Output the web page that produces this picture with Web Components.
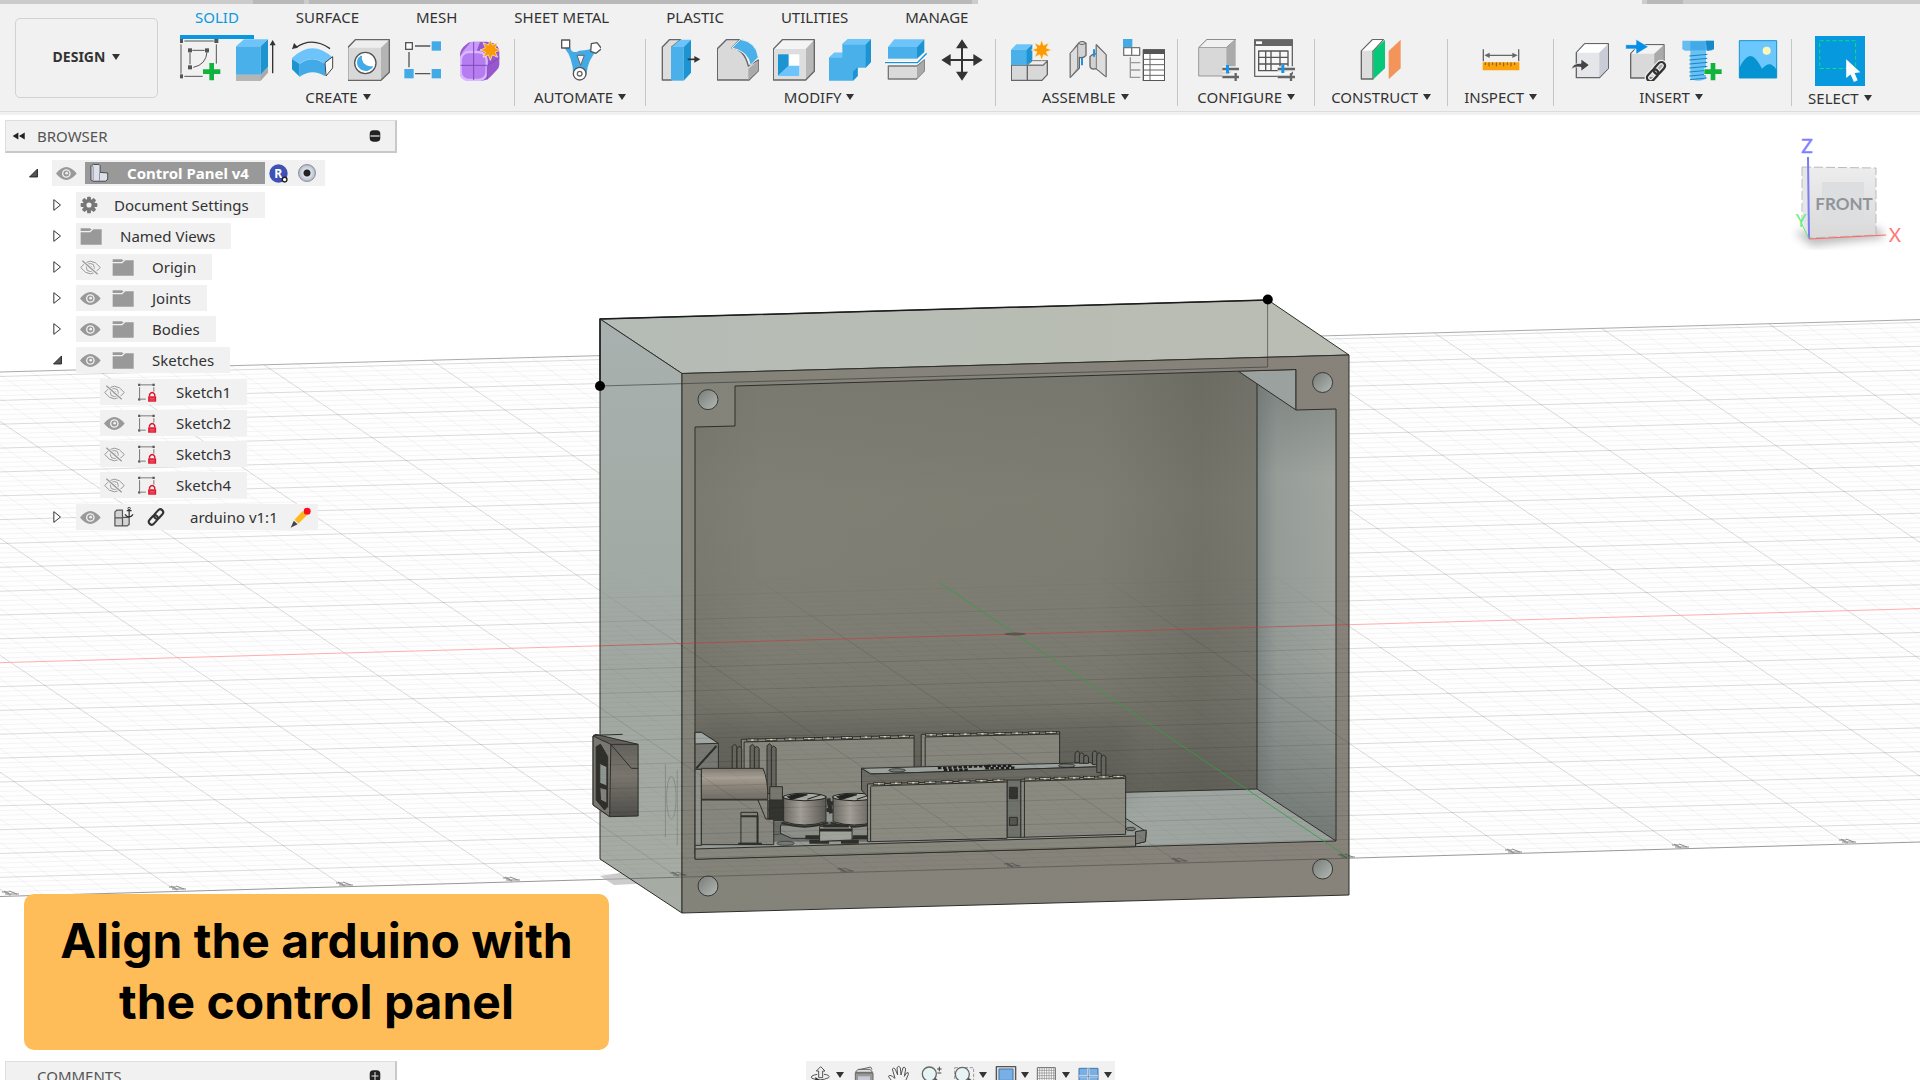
<!DOCTYPE html>
<html lang="en">
<head>
<meta charset="utf-8">
<title>Control Panel v4</title>
<style>
html,body{margin:0;height:100%;overflow:hidden;background:#fff}
body{font-family:"Noto Sans","Open Sans",sans-serif;font-size:15px;color:#333}
cad-app{height:100%}
</style>
</head>
<body>
<cad-app></cad-app>
<script>
const define=(name,html,setup)=>{
  customElements.define(name,class extends HTMLElement{
    constructor(){super();this.attachShadow({mode:'open'});}
    connectedCallback(){
      if(this.ready)return;this.ready=true;
      this.shadowRoot.innerHTML=typeof html==='function'?html(this):html;
      if(setup)setup(this);
    }
  });
};
const BTN='button{font:inherit;color:inherit;background:none;border:0;padding:0;margin:0;cursor:pointer}';
const sq=(x,y,c='#555',s=12)=>`<rect x="${x}" y="${y}" width="${s}" height="${s}" fill="${c}"/>`;
const P=(d,f='none',s='none',w=3)=>`<path d="${d}" fill="${f}" stroke="${s}" stroke-width="${w}" stroke-linejoin="round"/>`;
const star=(cx,cy,r,q,n=8)=>{let d='';for(let i=0;i<n*2;i++){const a=Math.PI*i/n-Math.PI/2,k=i%2?q:r;d+=(i?'L':'M')+(cx+k*Math.cos(a)).toFixed(1)+' '+(cy+k*Math.sin(a)).toFixed(1)}return P(d+'Z','#fb9b04','#fff3dc',2)};
const plus=(x,y)=>P(`M${x-10} ${y-27}h20v17h17v20h-17v17h-20v-17h-17v-20h17Z`,'#f1f1f1')+P(`M${x-7} ${y-26}h14v19h19v14h-19v19h-14v-19h-19v-14h19Z`,'#10b43c');
const lines=(list,c='#555',w=3)=>P(list,'none',c,w);
const sliders=(x,y)=>P(`M${x} ${y}h54M${x} ${y+24}h54`,'none','#f1f1f1',16)+P(`M${x} ${y}h54M${x} ${y+24}h54`,'none','#666',7)+P(`M${x+40} ${y+12}v24`,'none','#666',7)+`<rect x="${x+11}" y="${y-12}" width="9" height="24" fill="#0d96f2"/>`;
const chain=(c,w)=>`<g fill="none" stroke="${c}" stroke-width="${w}" transform="rotate(-48 0 0)"><rect x="-35" y="-11" width="40" height="22" rx="11"/><rect x="-5" y="-11" width="40" height="22" rx="11"/></g>`;
const sunEye=(x,y)=>P(`M${x-31} ${y}Q${x} ${y-39} ${x+31} ${y}Q${x} ${y+39} ${x-31} ${y}Z`,'#999')+`<circle cx="${x}" cy="${y}" r="13" fill="#f1f1f1"/><circle cx="${x}" cy="${y}" r="9" fill="#999"/><circle cx="${x+1}" cy="${y-1}" r="4" fill="#f1f1f1"/>`;
const ICON={
sketch:['540 119 126 126',lines('M553 125h88M543 135v88M649 135v58M553 231h55')+lines('M577 153h37M570 160v35M580 204Q618 196 621 158')+sq(537,119)+sq(643,119)+sq(537,225)+sq(564,147)+sq(615,147)+sq(564,198)+plus(635,217)],
extrude:['708 119 126 126',P('M708 226h74l22-24v18l-22 24h-74Z','#aaa')+P('M708 226h74v18h-74Z','#b5b5b5')+P('M708 141l24-21h72l-22 21Z','#6dc4fa')+P('M708 141h74v85h-74Z','#4ab0ea')+P('M782 141l22-21v82l-22 24Z','#1c94d2')+lines('M818 132v90','#333',4)+P('M818 122l-9 16h18Z','#333')],
revolve:['876 119 126 126',P('M874 178Q936 116 1000 176L975 194Q936 164 899 194Z','#6dc4fa')+P('M874 178L899 194V232L874 208Z','#1c94d2')+P('M899 194Q936 166 975 194V230Q936 206 899 232Z','#42aae6')+P('M975 190L998 172V206L978 230Z','#f8f8f8','#444')+P('M886 146Q936 110 990 148','none','#333',4)+P('M876 150l6-19 12 13Z','#333')],
hole:['1044 119 126 126',P('M1043 145L1066 121H1168L1143 145Z','#eee')+P('M1143 145L1168 121V219L1143 243Z','#b4b4b4')+P('M1043 145H1143V243H1043Z','#d8d8d8')+P('M1043 145L1066 121H1168V219L1143 243H1043Z','none','#666',4)+'<circle cx="1096" cy="191" r="32" fill="#fff" stroke="#555" stroke-width="4"/>'+P('M1082 169Q1066 180 1073 200Q1084 218 1104 214Q1118 208 1119 201Q1100 202 1090 190Q1083 180 1086 169Z','#42aae6')],
pattern:['1210 119 126 126',lines('M1243 140h46M1225 158v46M1243 223h46','#555',4)+sq(1213,128,'#555',24)+sq(1217,132,'#fff',16)+sq(1293,126,'#42aae6',28)+sq(1211,209,'#42aae6',28)+sq(1293,209,'#42aae6',28)],
form:['1380 119 126 126','<path d="M1380 168Q1380 154 1390 143L1404 131Q1410 127 1420 127H1460Q1498 130 1498 160V196Q1497 206 1490 213L1470 234Q1460 244 1446 244H1406Q1380 244 1380 218Z" fill="#9657cf"/>'+P('M1385 160L1412 128H1440L1428 160Z','#c99bfa')+'<rect x="1382" y="158" width="78" height="84" rx="24" fill="#b57df0" stroke="#dcb9ff" stroke-width="7"/>'+lines('M1421 128V242M1382 198H1462L1498 176M1462 200V240','#8447bb')+star(1471,152,31,16)],
automate:['141 119 126 126',P('M160 132Q172 176 203 160Q238 158 252 148Q222 178 218 222H189Q190 180 160 132Z','#42aae6','#42aae6',12)+P('M195 168L217 168 206 198Z','#f1f1f1','#666')+P('M149 122h24v24h-24Z','#fff','#555',4)+P('M238 133L255 130 269 148 252 162 236 156Z','#fff','#555',4)+'<circle cx="203" cy="223" r="19" fill="#fff" stroke="#555" stroke-width="4"/><circle cx="203" cy="223" r="7" fill="#fff" stroke="#666" stroke-width="4"/>'],
press:['450 119 126 126',P('M454 143L475 121H509L482 143V242H454Z','#ddd','#666',4)+P('M482 143L508 121H540L518 143Z','#6dc4fa')+P('M480 143H518V244H480Z','#4ab0ea')+P('M518 143L540 121V220L518 244Z','#1c94d2')+lines('M530 180h24','#333',5)+P('M568 180l-18-10v20Z','#333')],
fillet:['618 119 126 126',P('M619 148L646 121H686L663 146Q700 150 712 200L742 182V214L714 242H619Z','#d9d9d9','#666',4)+P('M712 208L742 184V214L712 242Z','#aaa')+P('M663 146L688 120Q736 128 742 174L718 198Q712 156 663 146Z','#4ab0ea','#f1f1f1',3)],
shell:['786 119 126 126',P('M787 149L814 121H910L884 149Z','#f4f4f4')+P('M884 149L910 121V216L884 242Z','#b8b8b8')+P('M787 149H884V242H787Z','#ddd')+P('M787 149L814 121H910V216L884 242H787Z','none','#666',4)+P('M801 165H865V230H801Z','#fff')+P('M801 165H833V200L801 230Z','#1c94d2')+P('M801 230L833 199H865V230Z','#6dc4fa')],
combine:['954 119 126 126',P('M954 175L970 160H994V134L1010 120H1080V188L1064 205H1040V230L1026 244H954Z','#4ab0ea')+P('M994 134L1010 120H1080L1064 136H994Z','#6dc4fa')+P('M954 175L970 160H994V175Z','#6dc4fa')+P('M1064 136L1080 120V188L1064 205ZM1026 217L1040 203V230L1026 244Z','#1c94d2')],
split:['1122 119 126 126',P('M1131 143L1150 120H1240L1218 143Z','#6dc4fa')+P('M1131 143H1218V178H1131Z','#4ab0ea')+P('M1218 143L1240 120V158L1218 178Z','#1c94d2')+P('M1132 200H1218L1240 182V214L1216 239H1132Z','#dadada','#777',4)+P('M1218 202L1240 182V214L1218 238Z','#aaa')+P('M1122 190H1219L1247 162','none','#fff',10)+P('M1122 190H1219L1247 162','none','#1b92d4',4)],
move:['1291 119 126 126',lines('M1354 140v84M1312 182h84','#333',6)+P('M1354 120l-18 27h36ZM1354 244l-18-27h36ZM1292 182l28-18v36ZM1416 182l-28-18v36Z','#333')],
component:['33 119 126 126',P('M34 197H82V243H34ZM82 197H130L142 184V226L126 243H82Z','#d8d8d8','#666',4)+P('M82 197L98 184H142L128 197Z','#eee','#777')+P('M33 151L49 135H96L80 151Z','#6dc4fa')+P('M33 151H82V197H33Z','#4ab0ea')+P('M80 151L97 135V184L80 197Z','#1c94d2')+star(125,152,31,15)],
joint:['201 119 126 126',P('M211 162L233 135Q246 122 258 132V168Q250 178 238 174V206L211 234Z','#d2d2d2','#666',4)+P('M211 162L233 138V208L211 234Z','#ddd','#777')+P('M318 232L289 208Q270 212 270 200V172Q278 162 289 164V136L318 166Z','#d2d2d2','#666',4)+P('M289 138L318 166V232L289 208Z','#ddd','#777')+lines('M246 176v22M282 150v22','#1b92e8',6)+'<ellipse cx="246" cy="131" rx="10" ry="4" fill="#eee" stroke="#555" stroke-width="3"/>'],
bom:['369 119 126 126',sq(369,119,'#42aae6',28)+P('M371 145h24v23h-24ZM395 145h24v23h-24Z','#fff','#777',4)+lines('M391 174v62M391 190h30M391 212h30M391 234h30','#999',4)+P('M430 152H494V244H430Z','#fff','#555',4)+'<rect x="429" y="150" width="66" height="14" fill="#555"/>'+lines('M430 180h64M430 196h64M430 212h64M430 228h64M450 164v80','#666',3)],
configure:['588 119 126 126',P('M593 145L618 120H704L676 145Z','#f1f1f1','#777')+P('M593 145H676V230H593Z','#d8d8d8')+P('M676 145L704 120V205L676 230Z','#aaa')+P('M593 145V230H680','none','#999',3)+sliders(664,209)],
table:['759 119 126 126',P('M764 122H877V231H764Z','#f7f7f7','#666',4)+'<rect x="762" y="120" width="117" height="20" fill="#666"/><rect x="768" y="126" width="18" height="8" fill="#fff"/>'+lines('M776 155h88v59h-88ZM776 174h88M776 194h88M797 155v59M813 155v59M840 155v59','#555',4)+sliders(833,209)],
construct:['1083 119 126 126',P('M1087 155L1120 121H1153L1122 155V239H1087Z','#ddd','#666',4)+P('M1089 155L1122 122H1150L1122 153Z','#fff')+P('M1123 155L1158 121V207L1123 240Z','#06c878')+P('M1169 155L1205 121V207L1169 240Z','#f3955b')],
measure:['119 119 126 126',lines('M129 150v36M235 150v36M140 168h84','#666',4)+P('M132 168l16-8v16ZM232 168l-16-8v16Z','#666')+P('M127 189H237V213H127Z','#fba20c')+lines('M135 189v8M146 189v12M157 189v8M168 189v12M179 189v8M190 189v12M201 189v8M212 189v12M223 189v8','#845a10',3)],
derive:['385 119 126 126',P('M407 160L432 133H503V207L476 235H407Z','#e4e6ea','#666',4)+P('M409 160L433 135H501L476 160Z','#fff')+P('M476 160L502 135V207L476 234Z','#c9ccd6')+P('M391 211Q398 190 421 192V179L446 197 421 216V204Q402 200 391 211Z','#444','#fff',2)],
link:['550 119 126 126',P('M567 163L592 136H667V207L640 236H567Z','#d9d9d9','#666',4)+P('M569 163L593 138H665L638 163Z','#f4f4f4')+P('M638 163L666 138V205L638 234Z','#aaa')+P('M552 136H583V120L620 142 583 165V149H552Z','#078fe8','#f1f1f1',2)+'<g transform="translate(643 217)">'+chain('#f1f1f1',14)+chain('#333',7)+'</g>'],
screw:['722 119 126 126',P('M726 124H820V150L812 154H734L726 150Z','#68bdf0')+P('M750 126H796V154H750Z','#42aae6')+P('M796 124H821V150L800 154Z','#1788c8')+P('M750 154H797V238Q774 250 750 238Z','#69c2f7')+lines('M747 170l54-5M747 182l54-5M747 194l54-5M747 206l54-5M747 218l54-5M747 230l54-5M749 241l50-5','#1c84bd',3)+plus(818,217)],
picture:['885 119 126 126',P('M892 124H1004V236H892Z','#6cc8fc','#1593d4',3)+P('M892 206Q908 172 924 170Q940 168 960 208Q976 192 986 195Q996 200 1004 212V236H892Z','#0593d2')+'<circle cx="974" cy="154" r="12" fill="#fdf6b8"/>'],
select:['1126 107 149 149','<rect x="1126" y="107" width="149" height="149" fill="#0699dd"/><rect x="1140" y="121" width="107" height="83" fill="none" stroke="#0ddf83" stroke-width="3" stroke-dasharray="12 7"/>'+P('M1219 176V232L1232 222 1242 244 1253 239 1244 217 1261 215Z','#fff')],
eye:['239 152 63 44',sunEye(270,174)],
eyeoff:['239 152 63 44',P('M241 174Q270 136 300 174Q270 212 241 174Z','none','#999',3)+'<circle cx="270" cy="174" r="12" fill="none" stroke="#999" stroke-width="3"/><circle cx="270" cy="174" r="5" fill="#999"/>'+lines('M246 154L292 194','#f1f1f1',9)+lines('M246 154L292 194','#999',4)],
folder:['237 334 66 54',P('M239 338H266L272 341L266 346H239ZM239 350H268L277 341H302V387H239Z','#999')],
gear:['237 238 56 56','<g fill="#777"><circle cx="265" cy="266" r="19"/>'+[0,45,90,135].map(a=>`<rect x="259" y="240" width="12" height="52" rx="3" transform="rotate(${a} 265 266)"/>`).join('')+'</g><circle cx="265" cy="266" r="8" fill="#f1f1f1"/>'],
root:['270 144 60 60',P('M273 151L281 147H298L302 151V172L326 174V193L320 200H280L273 196Z','#dde0e8','#444',3)+P('M300 172V199M273 151L280 154V198','none','#8a90a0',3)],
sketchnode:['406 120 66 70',lines('M417 130h42M413 138v38M463 138v16M417 180h18','#666',3)+sq(408,126,'#555',8)+sq(458,126,'#555',8)+sq(408,177,'#555',8)+P('M443 170H471V189H443Z','#e0142c')+P('M448 170V163Q457 150 466 163V170','none','#e0142c',5)+lines('M448 177h18M448 183h18','#f3a0a8',2)],
part:['336 502 66 66',P('M339 518L346 512H364V536H386V560L380 564H339ZM339 538H364V564','#d4d4d4','#555',4)+lines('M386 510v26M372 526Q386 544 399 526M378 514h16','#333',4)+'<circle cx="386" cy="507" r="4" fill="none" stroke="#333" stroke-width="3"/>'],
chain:['438 506 56 56','<g transform="translate(466 534) scale(.82)">'+chain('#333',8)+'</g>'],
pencil:['864 500 66 66',P('M878 540L903 513 917 526 891 552Z','#fdb91c')+P('M876 543L888 554 866 565Z','#444')+'<circle cx="918" cy="513" r="11" fill="#fb0f1c"/>'],
badge:['806 146 56 56','<circle cx="834" cy="174" r="27" fill="#3f51b5"/><text x="833" y="187" font-size="36" font-weight="700" fill="#fff" text-anchor="middle">R</text><circle cx="852" cy="192" r="7" fill="#fff" stroke="#222" stroke-width="4"/>'],
orbit:['90 40 66 54',P('M116 78V58H109L122 45 135 58H128V78Z','#eee','#555',3)+P('M112 68Q88 72 96 80Q120 90 146 78Q152 70 132 68','none','#555',3)+P('M106 76v14l12-6Z','#333')],
look:['220 44 66 54',P('M224 66L232 57H268L276 66Z','#ddd','#666',3)+P('M236 58L270 50 274 58','none','#666',3)+P('M224 68H277V100H224Z','#999','#666',3)+P('M232 78H268V98H232Z','#c7cbd6')],
hand:['318 42 66 54',P('M334 92L322 76Q326 70 334 76L342 82 334 54Q338 48 343 55L350 72 348 50Q353 42 358 50L360 72 366 50Q372 46 374 54L370 76 376 66Q384 62 382 70L372 94Z','#f2f2f2','#555',3)],
zoom:['422 42 66 54',P('M460 80l14 14','none','#555',7)+'<circle cx="447" cy="69" r="21" fill="#e6f4f6" stroke="#666" stroke-width="4"/>'+lines('M470 54h14M477 47v14M471 66h12','#444',3)],
fit:['522 42 66 54','<rect x="527" y="50" width="57" height="50" fill="none" stroke="#999" stroke-width="3" stroke-dasharray="10 5"/>'+P('M566 82l14 12','none','#555',7)+'<circle cx="550" cy="70" r="21" fill="#e6f4f6" stroke="#666" stroke-width="4"/>'],
display:['652 42 66 54',P('M656 47H714V100H656Z','#ddd','#555',4)+P('M664 54H706V88H664Z','#78b0e6','#4175a8',3)],
grid:['774 42 66 54',P('M778 50H832V100H778Z','#fff','#666',3)+lines('M785 50v50M792 50v50M799 50v50M806 50v50M813 50v50M820 50v50M827 50v50M778 58h54M778 66h54M778 74h54M778 82h54M778 90h54','#888',2)],
views:['896 42 66 54',P('M899 52H956V100H899Z','#78b0e6','#4175a8',3)+lines('M927 52v48M899 76h57','#f1f1f1',6)+lines('M927 52v48M899 76h57','#4175a8',2)],
collapse:['34 52 44 30',P('M36 67L54 56V78ZM56 67L74 56V78Z','#222')],
minus:['1110 50 34 34','<rect x="1112" y="51" width="30" height="32" rx="10" fill="#222"/>'+lines('M1114 67h26','#ccc',4)],
plus:['1110 50 34 34','<rect x="1112" y="51" width="30" height="32" rx="10" fill="#222"/>'+lines('M1117 67h20M1127 56v22','#ddd',3)],
closed:['158 250 30 36',P('M162 252V284L182 268Z','#fff','#333',3)],
open:['84 156 36 36',P('M89 187H115V161Z','#555','#222',3)]
};
define('cad-icon',el=>{
  const [vb,body]=ICON[el.getAttribute('name')];
  return `<style>:host{display:block;flex:none}svg{display:block;width:100%;height:100%}</style><svg viewBox="${vb}" aria-hidden="true">${body}</svg>`;
});

define('tab-strip',`<style>:host{display:flex;gap:27px}</style><slot></slot>`);
define('tool-tab',`<style>${BTN}:host{display:block}
button{display:block;padding:0 15px 4px;height:27px;line-height:27px;border-bottom:4px solid transparent;box-sizing:content-box}
:host([active]) button{color:#0a9ae0;border-color:#0a96e0}</style><button><slot></slot></button>`);

define('tool-group',el=>`<style>${BTN}
:host{display:flex;flex-direction:column;align-items:center;height:67px;padding:0 12px 0 15px;border-right:1px solid #c6c6c6}
:host([last]){border:0}
:host([compact]){padding:0 19px}
:host([tight]){padding:0 16px}
.icons{display:flex;gap:14px;align-items:center;height:43px}
.icons button,cad-icon{display:block;width:42px;height:42px}
:host([last]) .icons button,:host([last]) cad-icon{width:50px;height:50px;flex:none}
.label{display:flex;align-items:center;gap:5px;line-height:20px;margin:6px 6px 0 0;white-space:nowrap}
:host([compact]) .label,:host([tight]) .label{margin-right:0}
.label::after{content:"";border:4px solid transparent;border-top:6px solid #333;border-bottom:0}
</style><div class="icons">${el.getAttribute('icons').split(' ').map(n=>`<button aria-label="${n}"><cad-icon name="${n}"></cad-icon></button>`).join('')}</div><button class="label"><slot></slot></button>`);

define('tool-bar',`<style>${BTN}
:host{display:flex;flex-direction:column;height:115px;background:#f1f1f1;flex:none}
.strip{height:4px;background:linear-gradient(90deg,#cbcbcb 253px,#b9b9b9 253px 304px,#ccc 304px 309px,#b9b9b9 309px 972px,#ccc 972px 978px,#f1f1f1 978px 1642px,#ccc 1642px 1647px,#b9b9b9 1647px 1683px,#ccc 1683px)}
.body{display:flex;height:107px;border-bottom:1px solid #dcdcdc}
.design{margin:14px 22px 0 15px;width:143px;height:80px;flex:none;box-sizing:border-box;border:1px solid #d2d2d2;border-radius:5px;font-weight:700;font-size:14px;padding-bottom:3px;display:flex;align-items:center;justify-content:center;gap:7px}
.design::after{content:"";border:4px solid transparent;border-top:6px solid #333;border-bottom:0}
.right{flex:1;min-width:0}
.groups{display:flex}
tool-group:first-child{padding-left:0}
</style>
<div class="strip"></div>
<div class="body"><button class="design">DESIGN</button>
<div class="right">
<tab-strip><tool-tab active>SOLID</tool-tab><tool-tab>SURFACE</tool-tab><tool-tab>MESH</tool-tab><tool-tab>SHEET METAL</tool-tab><tool-tab>PLASTIC</tool-tab><tool-tab>UTILITIES</tool-tab><tool-tab>MANAGE</tool-tab></tab-strip>
<div class="groups">
<tool-group icons="sketch extrude revolve hole pattern form">CREATE</tool-group>
<tool-group compact icons="automate">AUTOMATE</tool-group>
<tool-group icons="press fillet shell combine split move">MODIFY</tool-group>
<tool-group icons="component joint bom">ASSEMBLE</tool-group>
<tool-group compact icons="configure table">CONFIGURE</tool-group>
<tool-group tight icons="construct">CONSTRUCT</tool-group>
<tool-group tight icons="measure">INSPECT</tool-group>
<tool-group icons="derive link screw picture">INSERT</tool-group>
<tool-group tight last icons="select">SELECT</tool-group>
</div></div></div>`);

define('dock-panel',el=>`<style>${BTN}
:host{display:flex;align-items:center;box-sizing:border-box;width:392px;height:33px;background:#f1f1f1;border:1px solid #dedede;border-right:2px solid #c9c9c9;border-bottom:2px solid #c9c9c9;padding:0 14px 0 6px;color:#555}
.c,.c cad-icon{display:block;width:14px;height:10px}.t{flex:1;padding-left:11px}
.m,.m cad-icon{display:block;width:12px;height:12px}
:host([plain]){height:30px}
:host([plain]) .c{visibility:hidden}
</style><button class="c" aria-label="collapse"><cad-icon name="collapse"></cad-icon></button><span class="t"><slot></slot></span><button class="m" aria-label="options"><cad-icon name="${el.hasAttribute('plain')?'plus':'minus'}"></cad-icon></button>`);

define('tree-node',el=>{
  const s=el.getAttribute('state');
  const ic=(el.getAttribute('icons')||'').split(' ').filter(Boolean).map(n=>n.startsWith('eye')?`<button aria-label="visibility"><cad-icon class="eye" name="${n}"></cad-icon></button>`:`<cad-icon class="${n}" name="${n}"></cad-icon>`);
  const eye=ic[0]&&ic[0].startsWith('<button')?ic.shift():'';
  return `<style>${BTN}
:host{display:block}
.row{display:flex;align-items:center;height:26px;margin-bottom:5px}
.tw{width:24px;height:26px;flex:none;display:flex;align-items:center}
.tw cad-icon{width:11px;height:12px}
.chip{display:flex;align-items:center;height:26px;background:#f1f1f1;padding:0 16px 0 4px;gap:11px;font-size:15px;line-height:20px;white-space:nowrap}
.eye{width:21px;height:15px}.folder,.sketchnode,.part{width:22px;height:20px}.gear{width:18px;height:18px}.chain{width:20px;height:18px;margin-right:6px}
.body{display:flex;align-items:center;gap:18px}
.gear+span{margin-left:-2px}
.part+.chain{margin-left:-7px}
:host([root]) .chip{padding-right:9px;gap:8px}
:host([root]) .body{background:#999;color:#fff;font-weight:700;height:22px;width:175px;padding-left:5px}
.root{width:19px;height:20px}
:host([linked]) .chip{padding-right:7px;gap:12px}
.kids{display:block;padding-left:24px}
:host([state=open]) .kids{padding-top:1px}
:host([state=open]:not([root])) .kids{padding-bottom:1px}
</style><div class="row"><button class="tw" aria-label="toggle">${s?`<cad-icon name="${s}"></cad-icon>`:''}</button><div class="chip">${eye}<div class="body">${ic.join('')}<span>${el.getAttribute('label')}</span></div><slot name="end"></slot></div></div><div class="kids"><slot></slot></div>`;
});

define('active-radio',`<style>:host{display:flex}input{appearance:none;margin:0;width:18px;height:18px;border-radius:50%;border:1px solid #8b8f98;background:radial-gradient(circle,#222 0 3px,#dfe3ec 4px,#a9b1c2 9px)}</style><input type="radio" checked aria-label="Activate component">`);

define('model-tree',`<style>:host{display:block}
.b{width:19px;height:19px;margin-left:-4px}active-radio{margin-left:2px}.p{width:21px;height:21px}</style>
<tree-node root state="open" icons="eye root" label="Control Panel v4"><cad-icon slot="end" class="b" name="badge"></cad-icon><active-radio slot="end"></active-radio>
<tree-node state="closed" icons="gear" label="Document Settings"></tree-node>
<tree-node state="closed" icons="folder" label="Named Views"></tree-node>
<tree-node state="closed" icons="eyeoff folder" label="Origin"></tree-node>
<tree-node state="closed" icons="eye folder" label="Joints"></tree-node>
<tree-node state="closed" icons="eye folder" label="Bodies"></tree-node>
<tree-node state="open" icons="eye folder" label="Sketches">
<tree-node icons="eyeoff sketchnode" label="Sketch1"></tree-node>
<tree-node icons="eye sketchnode" label="Sketch2"></tree-node>
<tree-node icons="eyeoff sketchnode" label="Sketch3"></tree-node>
<tree-node icons="eyeoff sketchnode" label="Sketch4"></tree-node>
</tree-node>
<tree-node linked state="closed" icons="eye part chain" label="arduino v1:1"><cad-icon slot="end" class="p" name="pencil"></cad-icon></tree-node>
</tree-node>`);

define('tip-banner',`<style>:host{display:flex;align-items:center;justify-content:center;box-sizing:border-box;width:585px;height:156px;background:#ffbd59;border-radius:10px;color:#000;font:700 48px/61px Inter,"Noto Sans",sans-serif;text-align:center;padding-bottom:3px}p{margin:0}</style><p><slot></slot></p>`);

define('nav-bar',`<style>${BTN}:host{display:flex;align-items:flex-start;background:#f1f1f1;width:309px;box-sizing:border-box;padding:3px 3px 0 4px;height:33px;justify-content:space-between}
button{display:flex;align-items:center;gap:4px;height:20px;padding:0 2px}cad-icon{width:22px;height:18px}
.m{padding:0}
.m::after{content:"";border:4px solid transparent;border-top:6px solid #333;border-bottom:0;margin-top:2px}</style>
<button class="m" aria-label="orbit"><cad-icon name="orbit"></cad-icon></button><button aria-label="look at"><cad-icon name="look"></cad-icon></button><button aria-label="pan"><cad-icon name="hand"></cad-icon></button><button aria-label="zoom"><cad-icon name="zoom"></cad-icon></button><button class="m" aria-label="fit"><cad-icon name="fit"></cad-icon></button><button class="m" aria-label="display"><cad-icon name="display"></cad-icon></button><button class="m" aria-label="grid"><cad-icon name="grid"></cad-icon></button><button class="m" aria-label="viewports"><cad-icon name="views"></cad-icon></button>`);

define('view-cube',`<style>:host{display:block;width:120px;height:120px}svg{display:block;width:100%;height:100%}</style>
<svg viewBox="1790 130 120 120" font-size="19" font-family="Lato,'Noto Sans',sans-serif">
<defs><linearGradient id="f" x2="0" y2="1"><stop stop-color="#ededed"/><stop offset="1" stop-color="#d9d9d9"/></linearGradient><filter id="b" x="-30%" y="-80%" width="160%" height="260%"><feGaussianBlur stdDeviation="4"/></filter></defs>
<path d="M1794 232L1880 228 1884 238 1812 246Z" fill="#888" opacity=".55" filter="url(#b)"/>
<path d="M1802 167L1876 168 1876 235 1809 239 1803 222Z" fill="url(#f)"/>
<path d="M1802 167L1809 169V239L1803 222Z" fill="#e6e6e6"/>
<path d="M1822 182H1864V224H1822Z" fill="#dcdee0"/>
<path d="M1802 167L1876 168V235L1809 238M1802 167V222" fill="none" stroke="#bbb" stroke-dasharray="9 3"/>
<text x="1844" y="210" font-size="17" font-weight="700" fill="#8f9499" text-anchor="middle">FRONT</text>
<path d="M1808 157L1809 239" stroke="#7b7bf2" fill="none" stroke-width="2"/><path d="M1809 239L1801 222" stroke="#5de67c"/><path d="M1809 239L1886 235" stroke="#f66"/>
<text x="1807" y="153" fill="#7f7fff" stroke="#7f7fff" stroke-width=".5" text-anchor="middle">Z</text><text x="1801" y="227" font-size="17" fill="#5df07c" text-anchor="middle">Y</text><text x="1895" y="242" fill="#ff7878" text-anchor="middle">X</text>
</svg>`);

define('model-view',()=>{
  const S=.0282;
  let minor='',major='',ticks='';
  for(let i=-64;i<=52;i++){
    const y=662.7+i*4.77,d=`M-10 ${(y+.3).toFixed(1)}L1930 ${(y-54.4).toFixed(1)}`;
    if(i%5)minor+=d;else if(i)major+=d;
  }
  for(let k=-50;k<=42;k++){
    const x=1513.5+k*33.4,y=896.5-S*x,d=`M${x.toFixed(1)} ${y.toFixed(1)}l-800 -537.6`;
    if(k%5)minor+=d;else if(k!==-5)major+=d;
    if(k%5===0&&x<1920&&x>-10)ticks+=`M${(x-9).toFixed(0)} ${(y-4).toFixed(0)}h7M${(x-6).toFixed(0)} ${(y-2).toFixed(0)}h14M${(x-2).toFixed(0)} ${(y-5).toFixed(0)}l8 3M${(x-7).toFixed(0)} ${(y-5).toFixed(0)}l7 4`;
  }
  const ln=(d,w=1)=>`<path d="${d}" fill="none" stroke="#2e2e2b" stroke-width="${w}" vector-effect="non-scaling-stroke"/>`;
  const sh=(d,f,w=1)=>`<path d="${d}" fill="${f}" stroke="#2e2e2b" stroke-width="${w}" stroke-linejoin="round" vector-effect="non-scaling-stroke"/>`;
  const hole=(x,y)=>`<ellipse cx="${x}" cy="${y}" rx="10" ry="10" fill="url(#hole)" stroke="#383834"/>`;
  const pin=(x,y,h)=>sh(`M${x} ${y+6}L${x+6} ${y}L${x+12} ${y+6}V${y+h}H${x}Z`,'#66665f');
  const cap=(x)=>sh(`M${x-8} 375V400L${x+20} 415H${x+105}V375Z`,'#8c9089')+sh(`M${x} 290V365Q${x+53} 385 ${x+107} 365V290Z`,'url(#cap)')+`<ellipse cx="${x+53}" cy="291" rx="54" ry="11" fill="#a7aaa2" stroke="#262623" stroke-width="3"/>`+`<path d="M${x+10} 290Q${x+30} 280 ${x+60} 284L${x+20} 298ZM${x+60} 298L${x+95} 284" fill="#222" stroke="#222" stroke-width="3"/>`+ln(`M${x-6} 368Q${x+53} 392 ${x+112} 368`,2);
  const studs=(x0,y0,x1,y1,n)=>{let s='';for(let i=0;i<n;i++){const t=(i+.5)/n,x=x0+(x1-x0)*t,y=y0+(y1-y0)*t;s+=`<rect x="${x-14}" y="${y-3}" width="28" height="6" fill="#a79c86" stroke="#222" stroke-width="2"/><rect x="${x-3}" y="${y-2}" width="6" height="4" fill="#d8d8d2"/>`}return s};
  return `<style>:host{display:block}svg{display:block;width:100%;height:100%}</style>
<svg viewBox="0 115 1920 965" preserveAspectRatio="xMidYMin slice" role="img" aria-label="Enclosure with arduino board">
<defs>
<clipPath id="floor"><path d="M0 372L1920 319V842L0 896.5Z"/></clipPath>
<clipPath id="box"><path d="M600 319L1268 300 1349 355V895L682 913 600 859Z"/></clipPath>
<clipPath id="open"><path d="M735 386L1296 369.5V410L1336 409V841L695 859V427L735 426Z"/></clipPath>
<linearGradient id="m" gradientUnits="userSpaceOnUse" x1="0" y1="570" x2="0" y2="640"><stop stop-color="#000"/><stop offset="1" stop-color="#fff"/></linearGradient>
<mask id="low" maskUnits="userSpaceOnUse" x="500" y="280" width="900" height="660"><rect x="500" y="280" width="900" height="660" fill="url(#m)"/></mask>
<linearGradient id="front"><stop stop-color="#84837a"/><stop offset="1" stop-color="#87827a"/></linearGradient>
<linearGradient id="left" x2="0" y2="1"><stop stop-color="#a8b1af"/><stop offset=".6" stop-color="#a0a7a1"/><stop offset="1" stop-color="#a7ada4"/></linearGradient>
<linearGradient id="top"><stop stop-color="#b5bcb5"/><stop offset="1" stop-color="#babdb3"/></linearGradient>
<linearGradient id="wall"><stop stop-color="#76756b"/><stop offset=".12" stop-color="#7d7c72"/><stop offset=".72" stop-color="#7a796f"/><stop offset=".9" stop-color="#6c6b62"/><stop offset="1" stop-color="#73726a"/></linearGradient>
<linearGradient id="wally" x2="0" y2="1"><stop stop-color="#6d6c63" stop-opacity=".2"/><stop offset=".3" stop-color="#8a897e" stop-opacity=".25"/><stop offset=".6" stop-color="#8a897e" stop-opacity=".15"/><stop offset=".95" stop-color="#504f49" stop-opacity=".42"/></linearGradient>
<linearGradient id="side"><stop stop-color="#7f8785"/><stop offset=".25" stop-color="#969d99"/><stop offset="1" stop-color="#a0a59f"/></linearGradient>
<linearGradient id="sidey" x2="0" y2="1"><stop stop-color="#666d6b" stop-opacity=".5"/><stop offset=".2" stop-color="#666d6b" stop-opacity="0"/><stop offset=".6" stop-color="#666d6b" stop-opacity=".05"/><stop offset="1" stop-color="#555b58" stop-opacity=".6"/></linearGradient>
<linearGradient id="deck"><stop stop-color="#7c827d"/><stop offset=".4" stop-color="#a5aca7"/><stop offset="1" stop-color="#9aa19c"/></linearGradient>
<linearGradient id="hole" x2="1" y2="1"><stop stop-color="#777b78"/><stop offset="1" stop-color="#b4bab6"/></linearGradient>
<linearGradient id="cyl" x2="0" y2="1"><stop stop-color="#7f7a71"/><stop offset=".3" stop-color="#a79f94"/><stop offset=".6" stop-color="#8a8379"/><stop offset="1" stop-color="#716e66"/></linearGradient>
<linearGradient id="cap"><stop stop-color="#6b6963"/><stop offset=".4" stop-color="#a39f97"/><stop offset="1" stop-color="#5b5954"/></linearGradient>
<linearGradient id="usb" x2="0" y2="1"><stop stop-color="#5d5c57"/><stop offset=".5" stop-color="#7a766e"/><stop offset="1" stop-color="#4f4e4a"/></linearGradient>
<g id="net" fill="none"><path d="${minor}" stroke-opacity=".045"/><path d="${major}" stroke-opacity=".14"/></g>
<filter id="soft" x="-20%" y="-50%" width="140%" height="200%"><feGaussianBlur stdDeviation="12"/></filter>
</defs>
<rect y="115" width="1920" height="965" fill="#fff"/>
<g clip-path="url(#floor)"><rect y="300" width="1920" height="620" fill="#fefefe"/><use href="#net" stroke="#000"/></g>
<path d="M0 372L1920 319.6" stroke="#aaa" fill="none"/><path d="M0 896.5L1920 842" stroke="#999" fill="none"/>
<path d="${ticks}" stroke="#8a8a8a" fill="none"/>
<path d="M0 662.7L1920 608.6" stroke="#f99" stroke-opacity=".8" fill="none"/>
<path d="M600 876L620 873 655 883 614 885Z" fill="#aaa" opacity=".6"/>
<g>
${sh('M600 319L1268 300 1349 355 682 373.5Z','url(#top)')}
${sh('M600 319L682 373.5V913L600 859Z','url(#left)')}
${sh('M682 373.5L1349 355V895L682 913Z','url(#front)')}
<g clip-path="url(#open)">
<path d="M695 380L1257 365V789L695 803Z" fill="url(#wall)"/><path d="M695 380L1257 365V789L695 803Z" fill="url(#wally)"/>
<path d="M1257 360H1336V841L1257 789Z" fill="url(#side)"/><path d="M1257 384L1336 409V841L1257 789Z" fill="url(#sidey)"/>
<path d="M695 803L1257 789 1336 841 695 859Z" fill="url(#deck)"/>
<path d="M700 720H1130V800H700Z" fill="#4c4b46" opacity=".3" filter="url(#soft)"/>
${sh('M1238 371L1296 369.5V410Z','#9aa19e')}
${ln('M695 803L1257 789 1336 841M1257 384V789')}
</g>
${ln('M735 386L1296 369.5V410L1336 409V841L695 859V427L735 426Z')}
${hole(708,399.6)}${hole(1322.6,382.5)}${hole(708,886)}${hole(1322.6,869)}
</g>
<g transform="translate(580 700) scale(.3954 .3333)">
<path d="M216 192V412M246 210V436" stroke="#7d8480" stroke-width="2"/><ellipse cx="231" cy="293" rx="12" ry="64" fill="none" stroke="#7d8480" stroke-width="2"/>
${sh('M33 108L40 103 147 133V348L75 350 33 315Z','url(#usb)')}
${sh('M33 108L78 133 75 350 33 315Z','#7a7871')}
${sh('M41 140L52 133 70 170V320L62 330 41 300Z','#2f2f2c')}
${sh('M50 190L68 200V258L50 250Z','#8e9590')}
${sh('M50 262L68 268V310L52 300Z','#85817a')}
${ln('M33 106L108 103M78 133L130 205H147M78 133H147',1)}
${sh('M408 118L845 106V330H408Z','#87877e')}${sh('M863 103L1213 95V230H863Z','#86867d')}
${studs(412,121,843,108,9)}${studs(866,105,1213,97,8)}${ln('M415 126L845 114M873 111L1213 102M415 126V300M873 111V230')}
${pin(385,133,120)}${pin(397,139,114)}${pin(430,133,120)}${pin(441,139,114)}${pin(473,131,150)}${pin(484,138,150)}
${sh('M291 97H307L350 130V208H291Z','#777872')}${sh('M291 97H307L350 130 291 132Z','#a1a7a2')}${ln('M345 138L294 205',2)}
${sh('M480 260H512V310H480Z','#77776f')}${sh('M478 300H520V362H478Z','#33332f')}
${sh('M291 435L520 400 1380 355 1432 395 1430 425 1405 432 291 460Z','#969c97')}
<path d="M490 365H740V425H490Z" fill="#545651" opacity=".65"/>
${sh('M291 208H307V436H291Z','#8f918a')}
${sh('M307 300H475V357H490V434H307Z','#86867e')}${ln('M450 300L470 357H490')}
${sh('M307 205H463Q476 240 475 298H307Z','url(#cyl)')}
${sh('M407 337H449V430H407Z','#85867d')}${ln('M407 349H449V430M400 431H460',2)}
${cap(515)}${cap(640)}
${ln('M628 295L635 340M625 310H640M624 330H638M570 412H610M580 425H630M660 425H705M690 412H735',4)}
${sh('M606 380L680 376 688 384V420L606 424Z','#a0a39a')}${ln('M606 390H688M615 378H680',3)}
${sh('M712 205L1290 188 1320 200 735 222Z','#9da49f')}
${sh('M712 205L735 222 1320 200V240L735 262V300L712 270Z','#6b6b64')}
<ellipse cx="802" cy="211" rx="21" ry="5" fill="#7b807b" stroke="#222" stroke-width="2"/><ellipse cx="1231" cy="197" rx="21" ry="5" fill="#7b807b" stroke="#222" stroke-width="2"/>
<path d="M905 204L1035 198M920 210L985 209M1025 205L1102 203M1030 198L1095 197" stroke="#1e1e1c" stroke-width="7" stroke-dasharray="9 4"/>
${pin(1252,153,35)}${pin(1263,158,32)}${pin(1274,165,25)}${pin(1296,152,42)}${pin(1307,158,60)}${pin(1318,165,65)}
${sh('M1080 240H1115V412H1080Z','#6f716b')}${sh('M1086 262H1106V296H1086Z','#33332f')}${sh('M1086 352H1106V376H1086Z','#555650')}
${sh('M727 252L1080 240V415L735 425H727Z','#8a8a81')}${studs(735,252,1080,240,8)}${ln('M735 260V425M735 258L1080 246')}
${sh('M1115 238L1380 228V403L1115 412Z','#8a8a81')}${studs(1120,238,1380,229,7)}${ln('M1124 242V412M1115 244L1380 235')}
${sh('M1405 395L1432 390 1430 425 1405 432Z','#7a7d77')}<ellipse cx="1393" cy="387" rx="12" ry="5" fill="#777" stroke="#222" stroke-width="2"/>
${sh('M291 447L1405 408V440L291 478Z','#88877d')}
<ellipse cx="520" cy="430" rx="22" ry="6" fill="#777b76" stroke="#333" stroke-width="2"/>
</g>
<g clip-path="url(#box)"><g mask="url(#low)"><g clip-path="url(#floor)"><use href="#net" stroke="#000" opacity=".8"/></g></g>
<path d="M0 896.5L1920 842" stroke="#444" stroke-opacity=".5" fill="none"/><path d="${ticks}" stroke="#333" stroke-opacity=".45" fill="none"/>
<path d="M0 662.7L1920 608.6" stroke="#c33" stroke-opacity=".55" fill="none"/></g>
<path d="M940 583L1349 858" stroke="#2ea043" stroke-opacity=".8" fill="none"/>
<ellipse cx="1015" cy="634" rx="11" ry="1.5" fill="#544" opacity=".7"/>
<path d="M600 386L1267.6 367V300" fill="none" stroke="#333" stroke-opacity=".6"/>
<path d="M600 386V319L1268 300" fill="none" stroke="#1c1c1c" stroke-width="1.5"/>
<circle cx="1267.8" cy="299.5" r="5" fill="#000"/><circle cx="600" cy="386" r="5" fill="#000"/>
</svg>`;
});

define('cad-app',`<style>
:host{display:flex;flex-direction:column;overflow:hidden}
main{flex:1;min-height:0;position:relative;display:flex;flex-direction:column}
model-view{position:absolute;inset:0}
.over{position:relative;flex:1;min-height:0;display:flex;flex-direction:column}
.top{display:flex;justify-content:space-between;align-items:flex-start;padding:5px 10px 0 5px}
view-cube{margin-top:10px}
.side{display:flex;flex-direction:column;gap:7px}
model-tree{margin-left:23px}
tip-banner{margin:auto 0 11px 24px}
.dock{height:19px;display:flex;overflow:hidden;padding-left:5px;flex:none;align-items:flex-start}
.dock nav-bar{margin-left:409px}
</style>
<tool-bar></tool-bar>
<main><model-view></model-view>
<div class="over">
<div class="top"><div class="side"><dock-panel>BROWSER</dock-panel><model-tree></model-tree></div><view-cube></view-cube></div>
<tip-banner>Align the arduino with<br>the control panel</tip-banner>
<div class="dock"><dock-panel plain>COMMENTS</dock-panel><nav-bar></nav-bar></div>
</div></main>`);
</script>
</body>
</html>
